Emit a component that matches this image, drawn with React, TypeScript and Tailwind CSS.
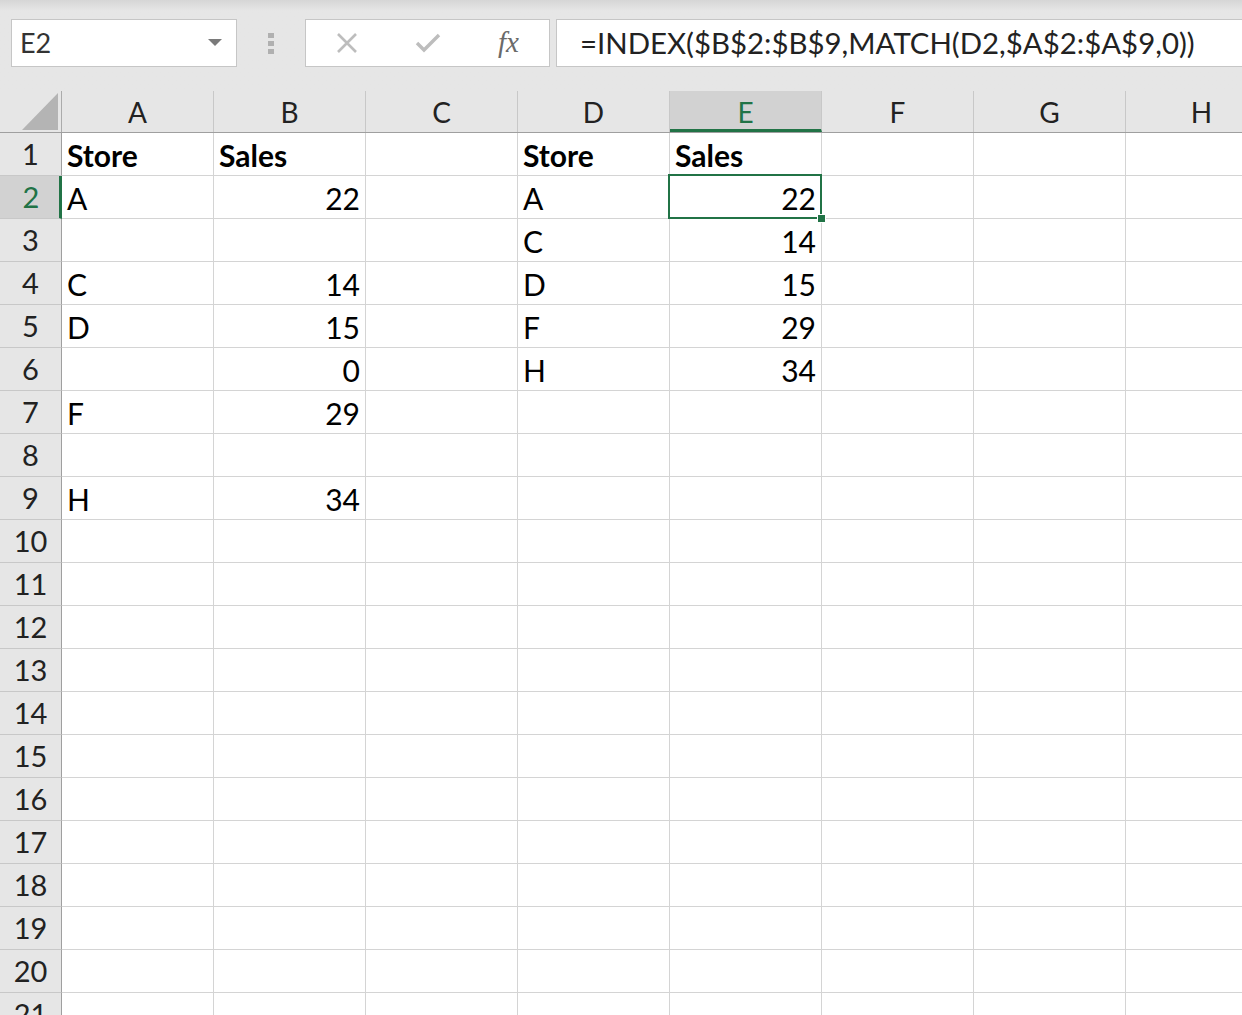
import React from "react";

const COLS = ["A", "B", "C", "D", "E", "F", "G", "H"];

type Cell = { t: string; bold?: boolean; right?: boolean };

const data: Record<string, Cell> = {
  "A1": { t: "Store", bold: true },
  "B1": { t: "Sales", bold: true },
  "D1": { t: "Store", bold: true },
  "E1": { t: "Sales", bold: true },
  "A2": { t: "A" }, "B2": { t: "22", right: true },
  "A4": { t: "C" }, "B4": { t: "14", right: true },
  "A5": { t: "D" }, "B5": { t: "15", right: true },
  "B6": { t: "0", right: true },
  "A7": { t: "F" }, "B7": { t: "29", right: true },
  "A9": { t: "H" }, "B9": { t: "34", right: true },
  "D2": { t: "A" }, "E2": { t: "22", right: true },
  "D3": { t: "C" }, "E3": { t: "14", right: true },
  "D4": { t: "D" }, "E4": { t: "15", right: true },
  "D5": { t: "F" }, "E5": { t: "29", right: true },
  "D6": { t: "H" }, "E6": { t: "34", right: true },
};

const font = { fontFamily: "Lato, 'Liberation Sans', sans-serif" };

export default function App() {
  const rows = Array.from({ length: 21 }, (_, i) => i + 1);
  return (
    <div className="w-[1242px] h-[1015px] overflow-hidden bg-white text-black" style={font}>
      {/* Formula bar */}
      <div className="h-[91px] bg-gradient-to-b from-[#d6d6d6] via-[#e6e6e6] via-[12%] to-[#e6e6e6] flex items-start pt-[19px]">
        <div className="ml-[11px] w-[226px] h-[48px] bg-white border border-[#c6c6c6] flex items-center justify-between pl-[8px] pr-[14px]">
          <span className="text-[27px] text-[#333]">E2</span>
          <svg width="14" height="8" viewBox="0 0 14 8"><path d="M0 0 L14 0 L7 7 Z" fill="#7a7a7a" /></svg>
        </div>
        <div className="w-[68px] h-[48px] flex flex-col items-center justify-center gap-[3px]">
          <div className="w-[6px] h-[5px] bg-[#b0b0b0]" />
          <div className="w-[6px] h-[5px] bg-[#b0b0b0]" />
          <div className="w-[6px] h-[5px] bg-[#b0b0b0]" />
        </div>
        <div className="w-[245px] h-[48px] bg-white border border-[#c6c6c6] flex items-center">
          <div className="w-[81px] flex justify-center">
            <svg width="24" height="24" viewBox="0 0 24 24"><path d="M3 3 L21 21 M21 3 L3 21" stroke="#bdbdbd" strokeWidth="2.6" /></svg>
          </div>
          <div className="w-[81px] flex justify-center">
            <svg width="26" height="22" viewBox="0 0 26 22"><path d="M2 11 L9 18 L24 3" stroke="#bdbdbd" strokeWidth="3.4" fill="none" /></svg>
          </div>
          <div className="w-[81px] flex justify-center">
            <span className="text-[29px] italic text-[#6a6a6a]" style={{ fontFamily: "'Liberation Serif', serif" }}>fx</span>
          </div>
        </div>
        <div className="ml-[6px] flex-1 h-[48px] bg-white border border-[#c6c6c6] border-r-0 flex items-center pl-[23px]">
          <span className="text-[29.4px] text-[#222] whitespace-nowrap">=INDEX($B$2:$B$9,MATCH(D2,$A$2:$A$9,0))</span>
        </div>
      </div>

      {/* Column headers */}
      <div className="flex h-[42px] bg-[#e6e6e6] border-b border-[#9f9f9f]">
        <div className="w-[62px] shrink-0 border-r border-[#ababab] flex items-end justify-end pr-[3px] pb-[2px]">
          <svg width="36" height="37" viewBox="0 0 36 37"><path d="M0 37 L36 37 L36 0 Z" fill="#b4b4b4" /></svg>
        </div>
        {COLS.map((c) => {
          const sel = c === "E";
          return (
            <div
              key={c}
              className={
                "w-[152px] shrink-0 border-r border-[#c8c8c8] flex items-center justify-center text-[28px] " +
                (sel ? "bg-[#d2d2d2] text-[#217346] border-b-[3px] border-b-[#217346] pt-[3px]" : "text-[#222]")
              }
            >
              {c}
            </div>
          );
        })}
      </div>

      {/* Rows */}
      {rows.map((r) => {
        const selRow = r === 2;
        return (
          <div key={r} className="flex h-[43px]">
            <div
              className={
                "w-[62px] shrink-0 border-b border-[#c8c8c8] flex items-center justify-center text-[29px] " +
                (selRow
                  ? "bg-[#d2d2d2] text-[#217346] border-r-[3px] border-r-[#217346] pl-[3px]"
                  : "bg-[#e6e6e6] text-[#222] border-r border-r-[#9f9f9f]")
              }
            >
              {r}
            </div>
            {COLS.map((c) => {
              const key = c + r;
              const cell = data[key];
              const sel = key === "E2";
              return (
                <div
                  key={key}
                  className={
                    "relative w-[152px] shrink-0 border-r border-b border-[#d4d4d4] flex items-center px-[5px] pt-[2px] text-[30px] " +
                    (cell?.right ? "justify-end" : "justify-start")
                  }
                >
                  {cell && <span className={cell.bold ? "font-bold" : ""}>{cell.t}</span>}
                  {sel && (
                    <>
                      <div className="absolute z-10 left-[-2px] top-[-2px] w-[154px] h-[45px] border-[2px] border-[#217346]" />
                      <div className="absolute z-20 right-[-5px] bottom-[-5px] w-[9px] h-[9px] bg-[#217346] border border-white" />
                    </>
                  )}
                </div>
              );
            })}
          </div>
        );
      })}
    </div>
  );
}
